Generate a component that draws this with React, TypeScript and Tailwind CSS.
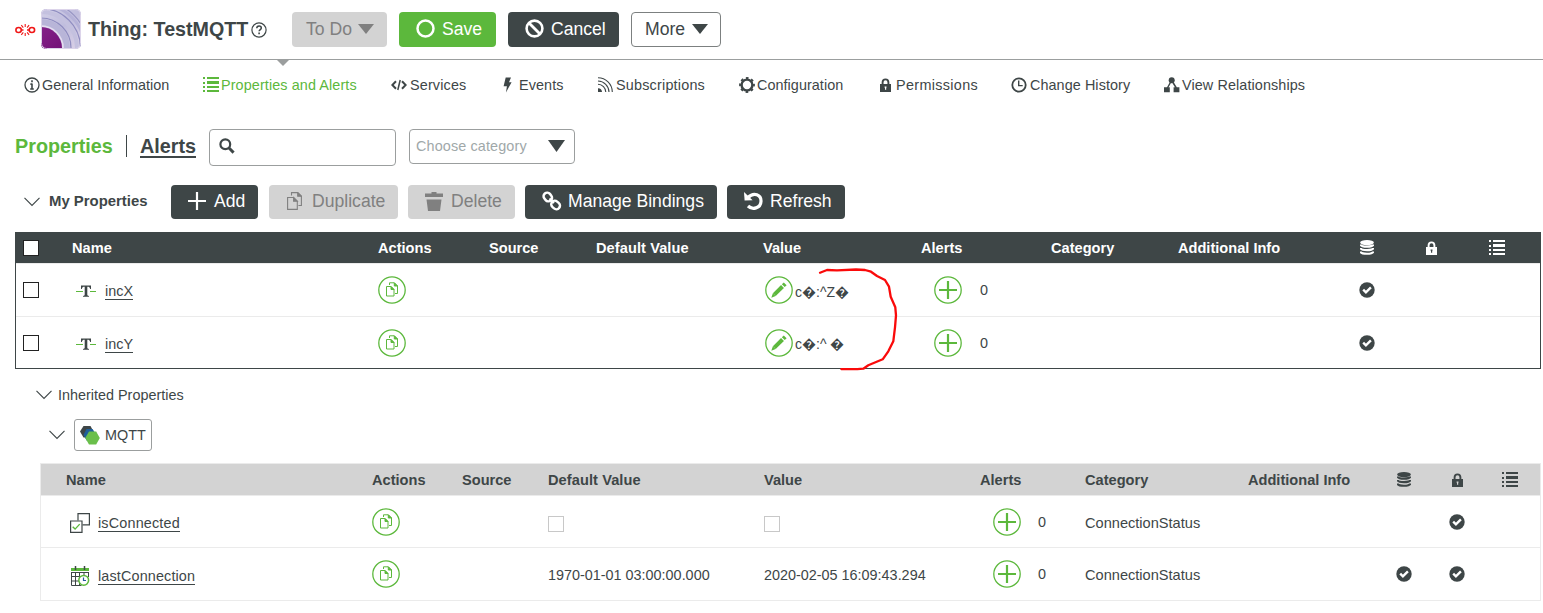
import React from 'react';
import clsx from 'clsx';

type IconProps = { className?: string };

/* ---------- icons ---------- */

const BrokenLinkIcon = () => (
  <svg width="21" height="14" viewBox="0 0 21 14" fill="none" stroke="#f01818">
    <ellipse cx="3.6" cy="7" rx="2.7" ry="2.5" strokeWidth="1.6" />
    <ellipse cx="16.9" cy="7" rx="2.7" ry="2.5" strokeWidth="1.6" />
    <path d="M6.3 7h2.2M12 7h2.2" strokeWidth="1.6" />
    <path d="M10.2 1v3M10.2 10v3M6.3 2.2l2 2.4M14.1 2.2l-2 2.4M6.3 11.8l2-2.4M14.1 11.8l-2-2.4" strokeWidth="1.1" />
  </svg>
);

const ThingLogo = () => (
  <svg width="40" height="40" viewBox="0 0 40 40">
    <defs>
      <linearGradient id="sky" x1="0" y1="0" x2="1" y2="1">
        <stop offset="0" stopColor="#d3d0e8" />
        <stop offset="0.5" stopColor="#c0bddd" />
        <stop offset="1" stopColor="#ddd3e8" />
      </linearGradient>
      <linearGradient id="core" x1="0" y1="0" x2="1" y2="1">
        <stop offset="0" stopColor="#8d2a90" />
        <stop offset="1" stopColor="#6a0a70" />
      </linearGradient>
      <clipPath id="tile">
        <rect width="40" height="40" rx="5" />
      </clipPath>
    </defs>
    <g clipPath="url(#tile)">
      <rect width="40" height="40" fill="url(#sky)" />
      <g fill="none">
        <circle cx="0" cy="39" r="46.5" stroke="#9896c4" strokeWidth="1.2" />
        <circle cx="0" cy="39" r="43.5" stroke="#b5b2d8" strokeWidth="3" />
        <circle cx="0" cy="39" r="39.5" stroke="#8f8dc0" strokeWidth="1.2" />
        <circle cx="0" cy="39" r="36" stroke="#c4c1df" strokeWidth="4" />
        <circle cx="0" cy="39" r="30" stroke="#8f8dc0" strokeWidth="1.2" />
        <circle cx="0" cy="39" r="26" stroke="#b8b5d8" strokeWidth="6" />
        <circle cx="0" cy="39" r="22" stroke="#e4def0" strokeWidth="1.4" />
      </g>
      <circle cx="0" cy="39" r="21" fill="url(#core)" />
      <rect x="0.5" y="0.5" width="39" height="39" rx="5" fill="none" stroke="#dcd4ea" />
    </g>
  </svg>
);

const HelpIcon = () => (
  <svg width="16" height="16" viewBox="0 0 16 16" fill="none" stroke="#3e4647">
    <circle cx="8" cy="8" r="7.1" strokeWidth="1.2" />
    <path d="M5.8 6.2c0-1.5 1-2.3 2.3-2.3s2.2.8 2.2 2c0 1.600-2.200 1.700-2.200 3.400" strokeWidth="1.5" />
    <path d="M8.1 10.500v1.700" strokeWidth="1.6" />
  </svg>
);

const InfoIcon = () => (
  <svg width="16" height="16" viewBox="0 0 16 16" fill="none" stroke="#3e4647">
    <circle cx="8" cy="8" r="7" strokeWidth="1.3" />
    <path d="M8 3.200v2M8 6.600v5.400M6.400 7.100H8M6.200 12h3.600" strokeWidth="1.6" />
  </svg>
);

const ListIcon = ({ className }: IconProps) => (
  <svg width="16" height="16" viewBox="0 0 16 16" className={className} fill="currentColor" shapeRendering="crispEdges">
    <path d="M0 0h2v2H0zM4 0h12v2H4zM0 5h2v2H0zM4 4h12v3H4zM0 9h2v2H0zM4 9h12v2H4zM0 13h2v2H0zM4 13h12v2H4z" />
  </svg>
);

const CodeIcon = () => (
  <svg width="16" height="12" viewBox="0 0 16 12" fill="none" stroke="#3e4647" strokeWidth="2">
    <path d="M5 2.2L1.3 6 5 9.8M11 2.2L14.7 6 11 9.8" />
    <path d="M9.2 1L6.8 11" strokeWidth="1.5" />
  </svg>
);

const BoltIcon = () => (
  <svg width="10" height="16" viewBox="0 0 10 16" fill="#3e4647">
    <path d="M3.700.6h5.300L7 5.2h2.600L4 15.400l.9-6.200H1.600z" />
  </svg>
);

const FeedIcon = () => (
  <svg width="16" height="16" viewBox="0 0 16 16" fill="none" stroke="#3e4647" strokeWidth="1.1">
    <path d="M1 .8A14.4 14.4 0 0 1 15.3 15M1 4A11.2 11.2 0 0 1 12 15M1 7.2A8 8 0 0 1 8.8 15" />
    <path d="M1 11.2A4 4 0 0 1 5 15H1z" fill="#3e4647" stroke="none" />
  </svg>
);

const CogIcon = () => (
  <svg width="16" height="16" viewBox="0 0 16 16" fill="none" stroke="#3e4647">
    <circle cx="8" cy="8" r="5.4" strokeWidth="2.4" />
    <circle cx="8" cy="8" r="7" strokeWidth="1.8" strokeDasharray="2.7 2.798" strokeDashoffset="1.35" />
  </svg>
);

const LockIcon = ({ className }: IconProps) => (
  <svg width="11" height="14" viewBox="0 0 11 14" className={className}>
    <path d="M2.6 6.5V4.3a2.9 2.9 0 0 1 5.8 0v2.2" fill="none" stroke="currentColor" strokeWidth="1.9" />
    <path fillRule="evenodd" fill="currentColor" d="M0 6h11v8H0zM4.6 8.4v1.3h.4v2h1.2v-2h.3V8.4z" />
  </svg>
);

const ClockIcon = () => (
  <svg width="16" height="16" viewBox="0 0 16 16" fill="none" stroke="#3e4647">
    <circle cx="8" cy="8" r="6.7" strokeWidth="1.8" />
    <path d="M7.7 3.6v5h4" strokeWidth="1.4" />
  </svg>
);

const RelationsIcon = () => (
  <svg width="16" height="16" viewBox="0 0 16 16">
    <circle cx="7.7" cy="3.2" r="3" fill="#3e4647" />
    <path d="M0 10.3h5.8v5H0zM9.6 10.3h5.8v5H9.6z" fill="#3e4647" />
    <path d="M6.7 5L3.4 11M8.700 5l3.600 6" stroke="#3e4647" strokeWidth="1.5" fill="none" />
  </svg>
);

const SearchIcon = () => (
  <svg width="16" height="16" viewBox="0 0 16 16" fill="none" stroke="#3e4647">
    <circle cx="6.3" cy="6.3" r="4.9" strokeWidth="2.2" />
    <path d="M10 10l4.600 4.600" strokeWidth="2.9" />
  </svg>
);

const ChevronIcon = () => (
  <svg width="16" height="10" viewBox="0 0 16 10" fill="none" stroke="#3e4647" strokeWidth="1.1">
    <path d="M.5.8L8 8.500 15.500.8" />
  </svg>
);

const CaretIcon = ({ className }: IconProps) => (
  <svg width="16" height="10" viewBox="0 0 16 10" preserveAspectRatio="none" className={className} fill="currentColor">
    <path d="M0 0h16L8 10z" />
  </svg>
);

const CircleIcon = () => (
  <svg width="19" height="19" viewBox="0 0 19 19" fill="none" stroke="#fff" strokeWidth="2.5">
    <circle cx="9.5" cy="9.5" r="8" />
  </svg>
);

const BanIcon = () => (
  <svg width="19" height="19" viewBox="0 0 19 19" fill="none" stroke="#fff">
    <circle cx="9.5" cy="9.5" r="7.9" strokeWidth="2.6" />
    <path d="M4 4l11 11" strokeWidth="2.8" />
  </svg>
);

const PlusIcon = () => (
  <svg width="18" height="18" viewBox="0 0 18 18" stroke="#fff" strokeWidth="2.2">
    <path d="M9 0v18M0 9h18" />
  </svg>
);

const PagesIcon = () => (
  <svg width="15" height="18" viewBox="0 0 15 18" fill="none" stroke="currentColor" strokeWidth="1.1">
    <path d="M4.5 3.5V.6h6.200l3.700 3.700v9.200h-3" />
    <path d="M.6 5.500h6l3.700 3.700v8.200H.6z" />
    <path d="M6.6 5.500v3.700h3.700zM10.700.6v3.700h3.700z" fill="currentColor" />
  </svg>
);

const TrashIcon = () => (
  <svg width="18" height="19" viewBox="0 0 18 19" fill="#808080">
    <path d="M6.5 0h5v1.500H18V5H0V1.500h6.500zM1.500 7.500h15L15 19H3z" />
  </svg>
);

const LinkIcon = () => (
  <svg width="20" height="20" viewBox="0 0 20 20" fill="none" stroke="#fff" strokeWidth="2.5">
    <rect x="-4.6" y="-3.6" width="9.2" height="7.2" rx="3.6" transform="translate(5.800 6) rotate(50)" />
    <rect x="-4.6" y="-3.6" width="9.2" height="7.2" rx="3.6" transform="translate(13.600 14) rotate(40)" />
    <path d="M7.500 7.500l4.500 4.500" strokeWidth="2" />
  </svg>
);

const UndoIcon = () => (
  <svg width="19" height="18" viewBox="0 0 19 18">
    <path d="M4 5.500C10-.5 17.300 3 17 9.300c-.3 7-8.700 8.900-13 4.700" fill="none" stroke="#fff" strokeWidth="3.2" />
    <path d="M0 0l.6 8.600 8-.4z" fill="#fff" />
  </svg>
);

const StringIcon = () => (
  <svg width="20" height="12" viewBox="0 0 20 12">
    <path d="M0 6.500h6.500M13.500 6.500h6.500" stroke="#5cb83c" strokeWidth="1" shapeRendering="crispEdges" />
    <path d="M5 .5h10V4h-.8C13.800 2.300 13.300 1.700 11.300 1.700v7.900c0 .9.400 1.200 1.700 1.300v.8H7v-.8c1.300-.1 1.700-.4 1.700-1.300V1.700C6.700 1.700 6.200 2.300 5.800 4H5z" fill="#3e4647" />
  </svg>
);

const BooleanIcon = () => (
  <svg width="20" height="20" viewBox="0 0 20 20" fill="none" stroke="#3e4647" strokeWidth="1.2">
    <path d="M8 7.400V.6h11.400v11.200H12.500" />
    <path d="M.6 8h11.400v11.400H.6z" />
    <path d="M2.700 13.700l2.400 2.400 4.600-5" stroke="#5cb83c" strokeWidth="1.400" />
  </svg>
);

const DateIcon = () => (
  <svg width="20" height="20" viewBox="0 0 20 20" fill="none">
    <path d="M1 2h18v3H1z" fill="#5cb83c" />
    <path d="M5.500 0v4M14.500 0v4" stroke="#3e4647" strokeWidth="1.500" />
    <path d="M1.500 6v13.500h10M18.500 6v5M1.500 6.500h17M1.500 10.500h12M1.500 15h8M5.500 6.500v13M9.500 6.500v13M14 6.500v3" stroke="#3e4647" />
    <circle cx="13.700" cy="14.300" r="4.900" fill="#fff" stroke="#5cb83c" strokeWidth="1.500" />
    <path d="M13.500 11.500v3h2.500" stroke="#24599c" strokeWidth="1.200" />
  </svg>
);

const DatabaseIcon = ({ className }: IconProps) => (
  <svg width="14" height="16" viewBox="0 0 14 16" className={className} fill="none" stroke="currentColor">
    <ellipse cx="7" cy="2.6" rx="6.900" ry="2.6" fill="currentColor" stroke="none" />
    <path d="M.7 4.500c0 2.800 12.600 2.800 12.600 0M.7 8c0 2.800 12.600 2.800 12.600 0M.7 11.500c0 3 12.600 3 12.600 0" strokeWidth="2.200" />
  </svg>
);

const CheckBadge = () => (
  <svg width="16" height="16" viewBox="0 0 16 16">
    <circle cx="8" cy="8" r="7.700" fill="#3e4647" />
    <path d="M4.200 7.700l2.700 2.700 5-5" fill="none" stroke="#fff" strokeWidth="2.400" />
  </svg>
);

const HexagonsIcon = () => (
  <svg width="20" height="19" viewBox="0 0 20 19">
    <path d="M3.500 0h7l3 5.500-3 6h-7L0 5.500z" fill="#3e4647" />
    <path d="M6.500 3h6l4 6-3.500 6H7L3.500 9z" fill="#1f5f9b" />
    <path d="M9 5.500h7.200l3.600 6.500-3.600 6.500H9L5.200 12z" fill="#6abf4b" />
  </svg>
);

/* ---------- round row actions ---------- */

const Round = ({ children }: { children: React.ReactNode }) => (
  <svg width="28" height="28" viewBox="0 0 28 28" className="shrink-0" fill="none" stroke="#5cb83c">
    <circle cx="14" cy="14" r="13.2" strokeWidth="1.3" />
    {children}
  </svg>
);

const CopyAction = () => (
  <Round>
    <path d="M11.500 9V6.800h4.800l3.200 3.200v7.500h-2.500M8.500 10.500h4.500l3 3v6.500H8.500z" />
    <path d="M13 10.500v3h3zM16.300 6.800v3.200h3.200z" fill="#5cb83c" />
  </Round>
);

const EditAction = () => (
  <Round>
    <path d="M9.300 18.700l8.200-8.200" strokeWidth="4" />
    <path d="M18.300 9.700l1.900-1.900" strokeWidth="4" />
    <path d="M7.900 17.300L6.300 21.700l4.400-1.600z" fill="#5cb83c" stroke="none" />
  </Round>
);

const AddAction = () => (
  <Round>
    <path d="M14 5v18M5 14h18" strokeWidth="2.200" />
  </Round>
);

/* ---------- layout ---------- */

const TABS = [
  { label: 'General Information', icon: <InfoIcon />, box: 'w-[179px]', iconBox: 'w-[18px]' },
  { label: 'Properties and Alerts', icon: <ListIcon />, box: 'w-[188px] tracking-[0.1px] text-[#5cb83c]', iconBox: 'w-[18px]' },
  { label: 'Services', icon: <CodeIcon />, box: 'w-[111px] tracking-[0.15px]', iconBox: 'w-[19px]' },
  { label: 'Events', icon: <BoltIcon />, box: 'w-[95px] tracking-[0.1px]', iconBox: 'w-[17px]' },
  { label: 'Subscriptions', icon: <FeedIcon />, box: 'w-[142px] tracking-[0.2px]', iconBox: 'w-[19px]' },
  { label: 'Configuration', icon: <CogIcon />, box: 'w-[140px] tracking-[0.05px]', iconBox: 'w-[18px]' },
  { label: 'Permissions', icon: <LockIcon />, box: 'w-[132px] tracking-[0.33px]', iconBox: 'w-[17px] pl-px' },
  { label: 'Change History', icon: <ClockIcon />, box: 'w-[153px] tracking-[0.07px]', iconBox: 'w-[19px]' },
  { label: 'View Relationships', icon: <RelationsIcon />, box: 'w-[160px] tracking-[0.1px]', iconBox: 'w-[18px]' },
];

const MY_PROPERTIES = [
  { name: 'incX', value: 'c\uFFFD:^Z\uFFFD', height: 'h-[53px] border-b border-[#ebebeb]' },
  { name: 'incY', value: 'c\uFFFD:^ \uFFFD', height: 'h-[51px]' },
];

const MY_GRID = 'grid grid-cols-[56px_306px_111px_107px_167px_158px_130px_127px_156px_65px_65px_65px] items-center';
const INHERITED_GRID = 'grid grid-cols-[306px_90px_86px_216px_216px_105px_163px_129px_54px_52px_54px] items-center pl-[25px]';

type ButtonProps = { className: string; icon?: React.ReactNode; iconBox?: string; children: React.ReactNode };

function Button({ className, icon, iconBox, children }: ButtonProps) {
  return (
    <button className={clsx('flex shrink-0 items-center rounded pb-[2px] text-[17.6px] leading-5', className)}>
      {icon && <span className={clsx('flex shrink-0', iconBox)}>{icon}</span>}
      {children}
    </button>
  );
}

function Box({ className }: IconProps) {
  return <span className={clsx('block size-4 border bg-white', className)} />;
}

export default function App() {
  return (
    <div className="relative h-[613px] w-[1543px] overflow-hidden bg-white font-['Liberation_Sans',Arial,sans-serif] text-[14.4px] leading-5 whitespace-nowrap text-[#3e4647]">
      <header className="flex h-[60px] items-center border-b border-[#9b9e9e] pl-[15px]">
        <BrokenLinkIcon />
        <div className="mr-[7px] ml-[5px] pb-[2px]"><ThingLogo /></div>
        <h1 className="w-[163px] pb-[2px] text-[19.7px] font-bold">Thing: TestMQTT</h1>
        <HelpIcon />
        <Button className="ml-[25px] h-[35px] w-[95px] bg-[#d3d3d3] pl-[14px] text-[#808080]">
          To Do
          <CaretIcon className="ml-[6px]" />
        </Button>
        <Button className="ml-3 h-[35px] w-[97px] bg-[#5cb83c] pl-[17px] text-white" icon={<CircleIcon />} iconBox="w-[26px]">Save</Button>
        <Button className="ml-3 h-[35px] w-[111px] bg-[#3e4647] pl-[17px] text-white" icon={<BanIcon />} iconBox="w-[26px]">Cancel</Button>
        <Button className="ml-3 h-[35px] w-[90px] border border-[#7c8080] pl-[13px]">
          More
          <CaretIcon className="ml-[7px]" />
        </Button>
      </header>

      <nav className="flex h-[50px] items-center pl-6">
        {TABS.map((tab) => (
          <a key={tab.label} className={clsx('flex shrink-0 items-center', tab.box)}>
            <span className={clsx('flex shrink-0', tab.iconBox)}>{tab.icon}</span>
            {tab.label}
          </a>
        ))}
      </nav>
      <svg className="absolute top-[60px] left-[277px]" width="12" height="6" viewBox="0 0 12 6">
        <path d="M0 0h12L6 6z" fill="#9b9e9e" />
      </svg>

      <div className="mt-[19px] flex h-[37px] items-start pl-[15px]">
        <div className="mt-[6px] flex h-[22px] w-[182px] items-center text-[19.8px] font-bold">
          <span className="w-[111px] text-[#5cb83c]">Properties</span>
          <span className="h-[22px] w-px bg-[#3e4647]" />
          <span className="mt-px ml-[13px] border-b-2 border-[#3e4647] leading-[20px]">Alerts</span>
        </div>
        <div className="ml-[12px] h-[37px] w-[187px] rounded border border-[#9b9e9e] pt-2 pl-[9px]">
          <SearchIcon />
        </div>
        <div className="ml-[13px] flex h-[35px] w-[166px] items-center justify-between rounded border border-[#9b9e9e] pr-[9px] pb-px pl-[6px]">
          <span className="tracking-[0.13px] text-[#a0a8a9]">Choose category</span>
          <CaretIcon className="h-[12px] w-[17px] text-[#3e4647]" />
        </div>
      </div>

      <div className="mt-[19px] flex h-[34px] items-center pl-6">
        <ChevronIcon />
        <span className="ml-[9px] w-[122px] pb-[2px] text-[14.9px] font-bold">My Properties</span>
        <Button className="h-[34px] w-[87px] bg-[#3e4647] pl-[17px] text-white" icon={<PlusIcon />} iconBox="w-[26px]">Add</Button>
        <Button className="ml-[11px] h-[34px] w-[129px] bg-[#d3d3d3] pl-[18px] text-[#808080]" icon={<PagesIcon />} iconBox="w-[25px]">Duplicate</Button>
        <Button className="ml-[10px] h-[34px] w-[107px] bg-[#d3d3d3] pl-[17px] text-[#808080]" icon={<TrashIcon />} iconBox="w-[26px]">Delete</Button>
        <Button className="ml-[10px] h-[34px] w-[192px] bg-[#3e4647] pl-[17px] text-white" icon={<LinkIcon />} iconBox="w-[26px]">Manage Bindings</Button>
        <Button className="ml-[10px] h-[34px] w-[118px] bg-[#3e4647] pl-[17px] text-white" icon={<UndoIcon />} iconBox="w-[26px]">Refresh</Button>
      </div>

      {/* My properties */}
      <section className="mt-[13px] ml-[15px] h-[137px] w-[1526px] border border-t-0 border-[#3e4647]">
        <div className={clsx(MY_GRID, 'h-[31px] bg-[#3e4647] text-[14.6px] font-bold text-white')}>
          <Box className="ml-[7px] border-[#222]" />
          <span>Name</span>
          <span>Actions</span>
          <span>Source</span>
          <span className="tracking-[0.08px]">Default Value</span>
          <span>Value</span>
          <span>Alerts</span>
          <span>Category</span>
          <span>Additional Info</span>
          <DatabaseIcon className="justify-self-center" />
          <LockIcon className="mt-px justify-self-center" />
          <ListIcon className="justify-self-center" />
        </div>
        <div className="border-t border-[#ebebeb]">
          {MY_PROPERTIES.map((row) => (
            <div key={row.name} className={clsx(MY_GRID, row.height)}>
              <Box className="ml-[7px] border-[#222]" />
              <div className="flex items-center pt-[2px] pl-1">
                <StringIcon />
                <span className="mt-px ml-[9px] border-b border-[#3e4647] leading-4">{row.name}</span>
              </div>
              <CopyAction />
              <span />
              <span />
              <div className="flex items-center pl-[2px]">
                <EditAction />
                <span className="ml-[2px] pt-[3px] text-[14px] whitespace-pre">{row.value}</span>
              </div>
              <div className="flex items-center pl-[13px]">
                <AddAction />
                <span className="ml-[18px]">0</span>
              </div>
              <span />
              <span />
              <span className="justify-self-center"><CheckBadge /></span>
            </div>
          ))}
        </div>
      </section>

      <div className="mt-4 flex h-5 items-center pl-9">
        <ChevronIcon />
        <span className="ml-[6px]">Inherited Properties</span>
      </div>
      <div className="mt-[14px] flex h-8 items-center pl-[49px]">
        <ChevronIcon />
        <div className="ml-[9px] flex h-8 w-[78px] items-center rounded-[3px] border border-[#9b9e9e] pl-[5px]">
          <HexagonsIcon />
          <span className="ml-[5px]">MQTT</span>
        </div>
      </div>

      {/* Inherited properties */}
      <section className="mt-3 ml-10 w-[1501px] border border-[#ebebeb]">
        <div className={clsx(INHERITED_GRID, 'h-[31px] bg-[#d3d3d3] text-[14.6px] font-bold')}>
          <span>Name</span>
          <span>Actions</span>
          <span>Source</span>
          <span className="tracking-[0.08px]">Default Value</span>
          <span>Value</span>
          <span>Alerts</span>
          <span>Category</span>
          <span>Additional Info</span>
          <DatabaseIcon className="justify-self-center" />
          <LockIcon className="mt-px justify-self-center" />
          <ListIcon className="justify-self-center" />
        </div>
        <div className={clsx(INHERITED_GRID, 'h-[52px] border-t border-[#ebebeb]')}>
          <div className="flex items-center pt-[2px] pl-1">
            <BooleanIcon />
            <span className="mt-px ml-2 border-b border-[#3e4647] leading-4 tracking-[0.17px]">isConnected</span>
          </div>
          <CopyAction />
          <span />
          <Box className="mt-[5px] border-[#c8c8c8]" />
          <Box className="mt-[5px] border-[#c8c8c8]" />
          <div className="flex items-center pl-[13px]">
            <AddAction />
            <span className="ml-[17px]">0</span>
          </div>
          <span className="pt-[2px] text-[14.6px]">ConnectionStatus</span>
          <span />
          <span />
          <span className="justify-self-center"><CheckBadge /></span>
        </div>
        <div className={clsx(INHERITED_GRID, 'h-[53px] border-t border-[#ebebeb]')}>
          <div className="flex items-center pt-[3px] pl-1">
            <DateIcon />
            <span className="mt-px ml-2 border-b border-[#3e4647] leading-4 tracking-[0.14px]">lastConnection</span>
          </div>
          <CopyAction />
          <span />
          <span className="pt-[2px]">1970-01-01 03:00:00.000</span>
          <span className="pt-[2px]">2020-02-05 16:09:43.294</span>
          <div className="flex items-center pl-[13px]">
            <AddAction />
            <span className="ml-[17px]">0</span>
          </div>
          <span className="pt-[2px] text-[14.6px]">ConnectionStatus</span>
          <span />
          <span className="justify-self-center"><CheckBadge /></span>
          <span className="justify-self-center"><CheckBadge /></span>
        </div>
      </section>

      {/* hand-drawn bracket over the values */}
      <svg className="absolute top-[260px] left-[810px]" width="100" height="116" viewBox="810 260 100 116">
        <path
          d="M820 272.700L827 270l10 .3 19-.8 9 .5 6 1.700 6 4.300 8 4 4 6.700 1.700 10 4.600 10.600.7 8-1 12-1.700 14-5 10-5.600 8-14.400 6-5 3.400-6 .5-16-.1"
          fill="none"
          stroke="#fa0a0a"
          strokeWidth="2.300"
          strokeLinejoin="round"
          strokeLinecap="round"
        />
      </svg>
    </div>
  );
}
